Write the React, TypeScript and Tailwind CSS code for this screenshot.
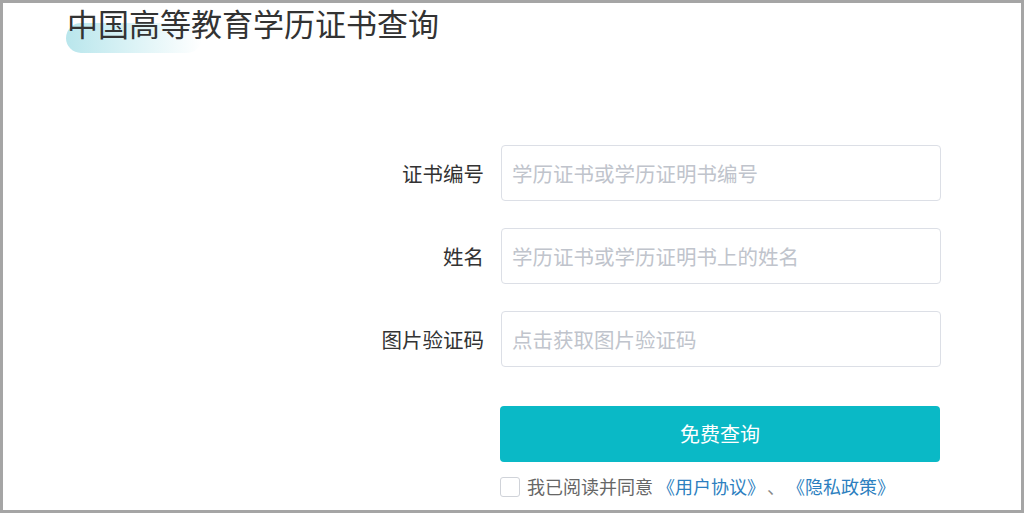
import React from "react";

const fields = [
  { label: "证书编号", placeholder: "学历证书或学历证明书编号" },
  { label: "姓名", placeholder: "学历证书或学历证明书上的姓名" },
  { label: "图片验证码", placeholder: "点击获取图片验证码" },
];

export default function App() {
  return (
    <div
      className="w-[1024px] h-[513px] border-[3px] border-[#a5a5a5] bg-white overflow-hidden"
      style={{ fontFamily: '"Noto Sans CJK SC", "Noto Sans", sans-serif' }}
    >
      <div className="relative pl-[64px] pt-0">
        <div className="absolute left-[63px] top-[20px] w-[136px] h-[30px] rounded-full bg-gradient-to-r from-[#b9e6ec] via-[#dcf3f6] to-white" />
        <h1 className="relative text-[31px] leading-[40px] text-[#333]">
          中国高等教育学历证书查询
        </h1>
      </div>

      <div className="mt-[102px] flex flex-col">
        {fields.map((f) => (
          <div key={f.label} className="flex items-center mb-[27px]">
            <label className="w-[498px] shrink-0 pr-[17px] text-right text-[20.5px] text-[#333]">
              {f.label}
            </label>
            <input
              className="w-[440px] h-[56px] rounded-[4px] border border-[#dcdfe6] px-[10px] text-[20.5px] text-[#333] placeholder:text-[#c0c4cc] outline-none"
              placeholder={f.placeholder}
            />
          </div>
        ))}

        <div className="pl-[497px] mt-[12px]">
          <button className="w-[440px] h-[56px] rounded-[4px] bg-[#0ab9c6] text-white text-[20px]">
            免费查询
          </button>
          <div className="flex items-center mt-[11px] text-[18px]">
            <span className="w-[20px] h-[20px] rounded-[3px] border border-[#d0d3d9] bg-white mr-[7px]" />
            <span className="text-[#666]">我已阅读并同意</span>
            <span className="ml-[4px] text-[#2d7fc0]">《用户协议》</span>
            <span className="mx-[2px] text-[#888]">、</span>
            <span className="text-[#2d7fc0]">《隐私政策》</span>
          </div>
        </div>
      </div>
    </div>
  );
}
